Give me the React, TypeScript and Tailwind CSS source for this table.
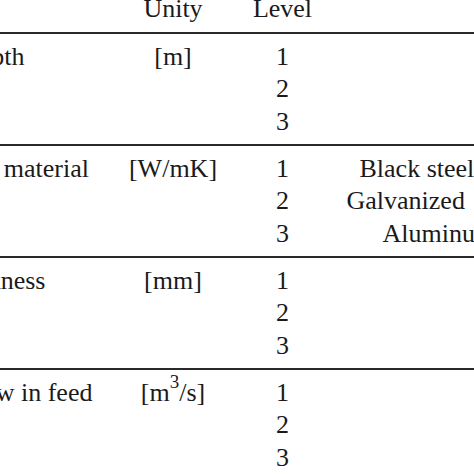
const groups = [
  { label: "Depth", shift: "", unit: <>[m]</>, materials: [] as { text: string; ml: string }[] },
  {
    label: "Pipe material",
    shift: "-ml-[10px]",
    unit: <>[W/mK]</>,
    materials: [
      { text: "Black steel", ml: "ml-[30px]" },
      { text: "Galvanized", ml: "ml-[17px]" },
      { text: "Aluminum", ml: "ml-[53px]" },
    ],
  },
  { label: "Thickness", shift: "-ml-[21px]", unit: <>[mm]</>, materials: [] },
  {
    label: "Flow in feed",
    shift: "",
    unit: (
      <>
        [m<sup className="text-[19px] -top-[13px]">3</sup>/s]
      </>
    ),
    materials: [],
  },
]

export default function App() {
  return (
    <div className="w-[474px] h-[474px] overflow-hidden bg-white text-[#1a1a1a] font-['Liberation_Serif',serif] text-[26px] leading-[32.5px]">
      <div className="w-[600px] -ml-[39px]">
        {/* header */}
        <div className="grid grid-cols-[149.5px_125px_94px_1fr] -mt-[7px] pb-[6px]">
          <div></div>
          <div className="text-center">Unity</div>
          <div className="text-center">Level</div>
          <div></div>
        </div>

        {groups.map((g) => (
          <div
            key={g.label}
            className="grid grid-cols-[149.5px_125px_94px_1fr] border-t-2 border-[#2a2a2a] pt-[7px] pb-[5.5px]"
          >
            <div className={`whitespace-nowrap ${g.shift}`}>{g.label}</div>
            <div className="text-center whitespace-nowrap">{g.unit}</div>
            <div className="flex flex-col items-center">
              <span>1</span>
              <span>2</span>
              <span>3</span>
            </div>
            <div className="flex flex-col">
              {g.materials.map((m) => (
                <span key={m.text} className={`whitespace-nowrap ${m.ml}`}>
                  {m.text}
                </span>
              ))}
            </div>
          </div>
        ))}
      </div>
    </div>
  )
}
